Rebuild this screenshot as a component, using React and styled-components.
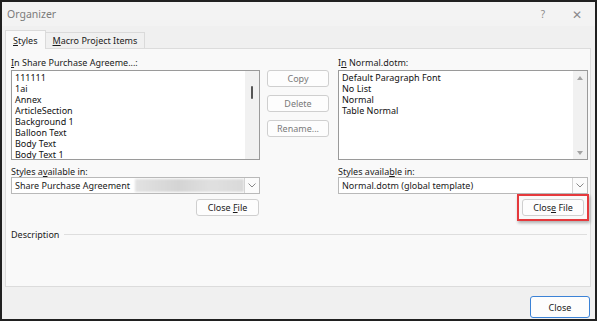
import styled, { createGlobalStyle } from "styled-components";

const GlobalStyle = createGlobalStyle`
    body {
        margin: 0;
        font-family: "Noto Sans", "Open Sans", sans-serif;
    }
`;

const Window = styled.div`
    width: 597px;
    height: 321px;
    box-sizing: border-box;
    border: 2px solid #202020;
    background: #f0f0f0;
    display: flex;
    flex-direction: column;
    color: #1b1b1b;
    font-size: 9px;
`;

const TitleBar = styled.div`
    height: 24px;
    display: flex;
    align-items: center;
    padding: 0 1px 0 5px;
    background: #f3f3f3;
`;

const Title = styled.div`
    flex: 1;
    font-size: 10.5px;
    color: #7b7b7b;
`;

const TitleButton = styled.div`
    width: 34px;
    text-align: center;
    color: #8a8a8a;
    font-size: ${p => p.$size || 11}px;
`;

const TabRow = styled.div`
    display: flex;
    align-items: flex-end;
    padding: 4px 0 0 3px;
    height: 18px;
`;

const Tab = styled.div`
    box-sizing: border-box;
    height: ${p => (p.$active ? 19 : 16)}px;
    padding: 0 7px;
    display: flex;
    align-items: center;
    background: ${p => (p.$active ? "#f9f9f9" : "#f0f0f0")};
    border: 1px solid #dadada;
    border-bottom: none;
    margin-bottom: ${p => (p.$active ? -1 : 0)}px;
    position: relative;
    z-index: ${p => (p.$active ? 1 : 0)};
    border-left-width: ${p => (p.$active ? 1 : 0)}px;
    font-size: 9px;
    color: #1b1b1b;
`;

const Panel = styled.div`
    margin: 0 4px 0 3px;
    height: 239px;
    box-sizing: border-box;
    border: 1px solid #dcdcdc;
    background: #f9f9f9;
    padding: 8px 2px 0 5px;
`;

const Columns = styled.div`
    display: flex;
    align-items: flex-start;
`;

const Column = styled.div`
    width: ${p => p.$width}px;
    display: flex;
    flex-direction: column;
`;

const ButtonStack = styled.div`
    width: 62px;
    margin: 13px 9px 0 7px;
    display: flex;
    flex-direction: column;
    gap: 8px;
`;

const Label = styled.div`
    height: 11px;
    line-height: 11px;
    margin-bottom: ${p => p.$gap ?? 2}px;
    margin-top: ${p => p.$top ?? 0}px;
    white-space: nowrap;
`;

const ListBox = styled.div`
    height: 90px;
    box-sizing: border-box;
    border: 1px solid #9a9a9a;
    background: #fff;
    display: flex;
    overflow: hidden;
`;

const Items = styled.div`
    flex: 1;
    padding: 1px 3px;
    color: #111;
`;

const Item = styled.div`
    height: 11px;
    line-height: 11px;
    white-space: nowrap;
`;

const ScrollTrack = styled.div`
    width: 14px;
    background: #f1f1f1;
    display: flex;
    flex-direction: column;
    align-items: center;
    justify-content: ${p => (p.$arrows ? "space-between" : "flex-start")};
    padding: ${p => (p.$arrows ? "5px 0 4px" : "15px 0 0")};
    box-sizing: border-box;
`;

const Thumb = styled.div`
    width: 2px;
    height: 13px;
    border-radius: 1px;
    background: #555;
`;

const Arrow = styled.div`
    width: 0;
    height: 0;
    border-left: 3.5px solid transparent;
    border-right: 3.5px solid transparent;
    ${p => (p.$down ? "border-top: 4px solid #a3a3a3;" : "border-bottom: 4px solid #a3a3a3;")}
`;

const Select = styled.div`
    height: 17px;
    box-sizing: border-box;
    border: 1px solid #b9b9b9;
    background: #fff;
    display: flex;
    align-items: stretch;
`;

const SelectText = styled.div`
    flex: 1;
    display: flex;
    align-items: center;
    padding-left: 3px;
    white-space: nowrap;
    overflow: hidden;
`;

const Blurred = styled.span`
    width: 112px;
    height: 13px;
    margin-left: 5px;
    background: linear-gradient(90deg, #e2e2e2, #d4d4d4 40%, #e0e0e0 70%, #d9d9d9);
    filter: blur(0.8px);
`;

const Chevron = styled.div`
    width: 14px;
    border-left: 1px solid #d4d4d4;
    background: #fbfbfb;
    display: flex;
    align-items: center;
    justify-content: center;
`;

const ButtonRow = styled.div`
    display: flex;
    justify-content: flex-end;
    margin-top: 5px;
    padding-right: ${p => p.$right || 0}px;
`;

const Button = styled.div`
    box-sizing: border-box;
    width: ${p => p.$width || 62}px;
    height: ${p => p.$height || 17}px;
    border: 1px solid ${p => (p.$default ? "#3b82d6" : "#cfcfcf")};
    border-radius: 3px;
    background: #fdfdfd;
    display: flex;
    align-items: center;
    justify-content: center;
    color: ${p => (p.$disabled ? "#7a7a7a" : "#1b1b1b")};
    font-size: 9px;
    white-space: pre;
`;

/* red annotation frame drawn round a button; negative margin keeps the flow unchanged */
const Highlight = styled.div`
    border: 2px solid #e5393c;
    padding: 3px;
    margin: -5px;
    box-shadow: 1px 2px 3px rgba(0, 0, 0, 0.3);
`;

const DescRow = styled.div`
    display: flex;
    align-items: center;
    gap: 5px;
    margin-top: 12px;
    margin-right: 1px;
`;

const Rule = styled.div`
    flex: 1;
    height: 1px;
    background: #dedede;
`;

const Footer = styled.div`
    display: flex;
    justify-content: flex-end;
    padding: 9px 5px 0 0;
`;

const leftItems = ["111111", "1ai", "Annex", "ArticleSection", "Background 1", "Balloon Text", "Body Text", "Body Text 1"];
const rightItems = ["Default Paragraph Font", "No List", "Normal", "Table Normal"];

function ChevronIcon() {
    return <svg width="8" height="5" viewBox="0 0 8 5">
        <path d="M0.5 0.5 L4 4 L7.5 0.5" fill="none" stroke="#7a7a7a" strokeWidth="0.9" />
    </svg>
}

export default function App() {
    return <Window>
        <GlobalStyle />
        <TitleBar>
            <Title>Organizer</Title>
            <TitleButton $size={10}>?</TitleButton>
            <TitleButton $size={12}>✕</TitleButton>
        </TitleBar>
        <TabRow>
            <Tab $active><span><u>S</u>tyles</span></Tab>
            <Tab><span><u>M</u>acro Project Items</span></Tab>
        </TabRow>
        <Panel>
            <Columns>
                <Column $width={249}>
                    <Label><u>I</u>n Share Purchase Agreeme...:</Label>
                    <ListBox>
                        <Items>
                            {leftItems.map((t, i) => <Item key={`l-${i}`}>{t}</Item>)}
                        </Items>
                        <ScrollTrack><Thumb /></ScrollTrack>
                    </ListBox>
                    <Label $top={6} $gap={0}>Styles a<u>v</u>ailable in:</Label>
                    <Select>
                        <SelectText>Share Purchase Agreement<Blurred /></SelectText>
                        <Chevron><ChevronIcon /></Chevron>
                    </Select>
                    <ButtonRow $right={1}>
                        <Button $width={63}><span>Close <u>F</u>ile</span></Button>
                    </ButtonRow>
                </Column>
                <ButtonStack>
                    <Button $disabled>Copy</Button>
                    <Button $disabled>Delete</Button>
                    <Button $disabled>Rename...</Button>
                </ButtonStack>
                <Column $width={250}>
                    <Label>I<u>n</u> Normal.dotm:</Label>
                    <ListBox>
                        <Items>
                            {rightItems.map((t, i) => <Item key={`r-${i}`}>{t}</Item>)}
                        </Items>
                        <ScrollTrack $arrows><Arrow /><Arrow $down /></ScrollTrack>
                    </ListBox>
                    <Label $top={6} $gap={0}>Styles availa<u>b</u>le in:</Label>
                    <Select>
                        <SelectText>Normal.dotm (global template)</SelectText>
                        <Chevron><ChevronIcon /></Chevron>
                    </Select>
                    <ButtonRow $right={4}>
                        <Highlight>
                            <Button><span>Clos<u>e</u> File</span></Button>
                        </Highlight>
                    </ButtonRow>
                </Column>
            </Columns>
            <DescRow>
                <span>Description</span>
                <Rule />
            </DescRow>
        </Panel>
        <Footer>
            <Button $default $width={60} $height={22}>Close</Button>
        </Footer>
    </Window>
}
